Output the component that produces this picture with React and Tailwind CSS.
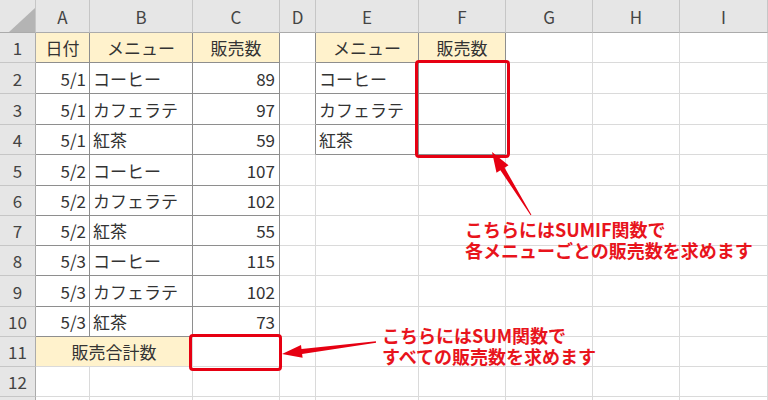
import React from "react";

const sales = [
  ["5/1", "コーヒー", "89"],
  ["5/1", "カフェラテ", "97"],
  ["5/1", "紅茶", "59"],
  ["5/2", "コーヒー", "107"],
  ["5/2", "カフェラテ", "102"],
  ["5/2", "紅茶", "55"],
  ["5/3", "コーヒー", "115"],
  ["5/3", "カフェラテ", "102"],
  ["5/3", "紅茶", "73"],
];
const menu = ["コーヒー", "カフェラテ", "紅茶"];
const letters = ["A", "B", "C", "D", "E", "F", "G", "H", "I"];

const LIGHT = "border-[#dadada]";
const DARK = "border-[#8e8e8e]";
const YELLOW = "bg-[#fff2cc]";

function Cell({ children, className = "" }) {
  return (
    <div className={`flex items-center overflow-hidden whitespace-nowrap border-r border-b text-[17px] leading-none text-[#333] ${className}`}>
      {children}
    </div>
  );
}

function rowCells(r) {
  const cells = [];
  if (r === 1) {
    cells.push(<Cell key="a" className={`${YELLOW} ${DARK} justify-center`}>日付</Cell>);
    cells.push(<Cell key="b" className={`${YELLOW} ${DARK} justify-center`}>メニュー</Cell>);
    cells.push(<Cell key="c" className={`${YELLOW} ${DARK} justify-center`}>販売数</Cell>);
    cells.push(<Cell key="d" className="border-r-[#8e8e8e] border-b-[#dadada]" />);
    cells.push(<Cell key="e" className={`${YELLOW} ${DARK} justify-center`}>メニュー</Cell>);
    cells.push(<Cell key="f" className={`${YELLOW} ${DARK} justify-center`}>販売数</Cell>);
  } else if (r <= 10) {
    const [d, m, n] = sales[r - 2];
    cells.push(<Cell key="a" className={`${DARK} justify-end pr-[3px]`}>{d}</Cell>);
    cells.push(<Cell key="b" className={`${DARK} pl-[3px]`}>{m}</Cell>);
    cells.push(<Cell key="c" className={`${DARK} justify-end pr-[4px]`}>{n}</Cell>);
    if (r <= 4) {
      cells.push(<Cell key="d" className="border-r-[#8e8e8e] border-b-[#dadada]" />);
      cells.push(<Cell key="e" className={`${DARK} pl-[3px]`}>{menu[r - 2]}</Cell>);
      cells.push(<Cell key="f" className={DARK} />);
    } else {
      cells.push(<Cell key="d" className={LIGHT} />);
      cells.push(<Cell key="e" className={LIGHT} />);
      cells.push(<Cell key="f" className={LIGHT} />);
    }
  } else if (r === 11) {
    cells.push(<Cell key="ab" className={`col-span-2 ${YELLOW} ${LIGHT} justify-center`}>販売合計数</Cell>);
    cells.push(<Cell key="c" className={LIGHT} />);
    cells.push(<Cell key="d" className={LIGHT} />);
    cells.push(<Cell key="e" className={LIGHT} />);
    cells.push(<Cell key="f" className={LIGHT} />);
  } else {
    ["a", "b", "c", "d", "e", "f"].forEach((k) => cells.push(<Cell key={k} className={LIGHT} />));
  }
  ["g", "h", "i"].forEach((k) => cells.push(<Cell key={k} className={LIGHT} />));
  return cells;
}

export default function App() {
  const rows = Array.from({ length: 13 }, (_, i) => i + 1);
  return (
    <div className="relative w-[768px] h-[400px] overflow-hidden bg-white font-['Noto_Sans_CJK_JP','Noto_Sans',sans-serif]">
      <div className="grid grid-cols-[36px_54px_103px_87px_36px_103px_87px_87px_87px_88px] grid-rows-[33px_30px_31px_31px_30px_31px_30px_30px_30px_31px_30px_30px_30px_30px]">
        {/* corner */}
        <div className="relative border-r border-b border-r-[#c6c6c6] border-b-[#ababab] bg-[#e6e6e6]">
          <svg className="absolute left-[9px] top-[8px]" width="26" height="24" viewBox="0 0 26 24">
            <polygon points="26,0 26,24 0,24" fill="#b4b4b4" />
          </svg>
        </div>
        {letters.map((l) => (
          <div
            key={l}
            className="flex items-center justify-center border-r border-b border-r-[#c6c6c6] border-b-[#ababab] bg-[#e6e6e6] text-[17px] leading-none text-[#444]"
          >
            {l}
          </div>
        ))}
        {rows.map((r) => (
          <React.Fragment key={r}>
            <div className="flex items-center justify-center border-r border-b border-r-[#ababab] border-b-[#c6c6c6] bg-[#e6e6e6] text-[17px] leading-none text-[#444]">
              {r < 13 ? r : null}
            </div>
            {rowCells(r)}
          </React.Fragment>
        ))}
      </div>

      {/* red highlight boxes */}
      <div className="absolute left-[415px] top-[60px] w-[95px] h-[98px] rounded-[4px] border-[3px] border-[#e60012]" />
      <div className="absolute left-[189px] top-[334px] w-[93px] h-[37px] rounded-[4px] border-[3px] border-[#e60012]" />

      {/* arrows */}
      <svg className="pointer-events-none absolute inset-0" width="768" height="400" viewBox="0 0 768 400">
        <polygon
          points="492,152 508.5,165.3 504.6,167.7 531.4,214.7 530.6,215.3 500.4,170.3 496.5,172.7"
          fill="#e60012"
        />
        <polygon
          points="282,354 301,345 301.5,348.9 375.9,341.3 376.1,342.7 302.1,353.9 302.6,357.8"
          fill="#e60012"
        />
      </svg>

      {/* annotations */}
      <div className="absolute left-[465px] top-[219px] text-[18px] leading-[21px] font-bold text-[#e8141c] whitespace-nowrap">
        <div>こちらにはSUMIF関数で</div>
        <div>各メニューごとの販売数を求めます</div>
      </div>
      <div className="absolute left-[382px] top-[325px] text-[18px] leading-[21px] font-bold text-[#e8141c] whitespace-nowrap">
        <div>こちらにはSUM関数で</div>
        <div>すべての販売数を求めます</div>
      </div>
    </div>
  );
}
